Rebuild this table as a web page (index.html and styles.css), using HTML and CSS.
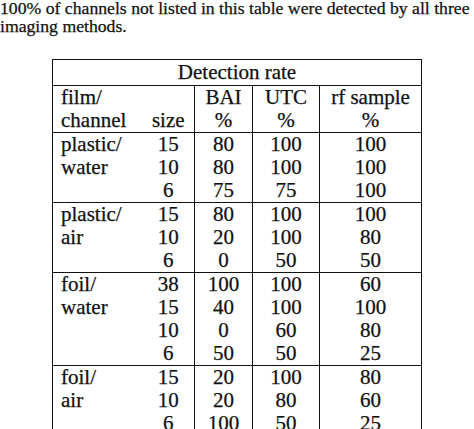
FILE: index.html
```html
<!DOCTYPE html>
<html>
<head>
<meta charset="utf-8">
<link rel="stylesheet" href="styles.css">
</head>
<body>
<p class="note">100% of channels not listed in this table were detected by all three<br>imaging methods.</p>
<table class="rates">
  <colgroup>
    <col class="c-film"><col class="c-size"><col class="c-bai"><col class="c-utc"><col class="c-rf">
  </colgroup>
  <thead>
    <tr class="title"><th colspan="5">Detection rate</th></tr>
    <tr><th class="film">film/</th><th></th><th>BAI</th><th>UTC</th><th>rf sample</th></tr>
    <tr><th class="film">channel</th><th>size</th><th>%</th><th>%</th><th>%</th></tr>
  </thead>
  <tbody>
    <tr><td class="film">plastic/</td><td>15</td><td>80</td><td>100</td><td>100</td></tr>
    <tr><td class="film">water</td><td>10</td><td>80</td><td>100</td><td>100</td></tr>
    <tr><td class="film"></td><td>6</td><td>75</td><td>75</td><td>100</td></tr>
  </tbody>
  <tbody>
    <tr><td class="film">plastic/</td><td>15</td><td>80</td><td>100</td><td>100</td></tr>
    <tr><td class="film">air</td><td>10</td><td>20</td><td>100</td><td>80</td></tr>
    <tr><td class="film"></td><td>6</td><td>0</td><td>50</td><td>50</td></tr>
  </tbody>
  <tbody>
    <tr><td class="film">foil/</td><td>38</td><td>100</td><td>100</td><td>60</td></tr>
    <tr><td class="film">water</td><td>15</td><td>40</td><td>100</td><td>100</td></tr>
    <tr><td class="film"></td><td>10</td><td>0</td><td>60</td><td>80</td></tr>
    <tr><td class="film"></td><td>6</td><td>50</td><td>50</td><td>25</td></tr>
  </tbody>
  <tbody>
    <tr><td class="film">foil/</td><td>15</td><td>20</td><td>100</td><td>80</td></tr>
    <tr><td class="film">air</td><td>10</td><td>20</td><td>80</td><td>60</td></tr>
    <tr><td class="film"></td><td>6</td><td>100</td><td>50</td><td>25</td></tr>
  </tbody>
</table>
</body>
</html>
```
FILE: styles.css
```css
html, body {
  margin: 0;
  padding: 0;
  overflow: hidden;
  background: #ffffff;
}
body {
  font-family: "Liberation Serif", "DejaVu Serif", serif;
  color: #111111;
  -webkit-text-stroke: 0.25px #111111;
}
.note {
  margin: 0;
  font-size: 17.7px;
  line-height: 17.5px;
  white-space: nowrap;
}
.rates {
  margin: 24px 0 0 52px;
  border-collapse: collapse;
  table-layout: fixed;
  width: 370px;
  border: 1px solid #111111;
  font-size: 21px;
}
.c-film { width: 90px; }
.c-size { width: 52px; }
.c-bai { width: 58px; }
.c-utc { width: 67px; }
.c-rf { width: 102px; }
.rates th, .rates td {
  font-weight: normal;
  padding: 0;
  height: 23px;
  line-height: 23px;
  text-align: center;
  white-space: nowrap;
}
.rates th:nth-child(n+3), .rates td:nth-child(n+3) {
  border-left: 1px solid #111111;
}
.rates .title th {
  height: 25px;
  border-bottom: 1px solid #111111;
}
.rates .film {
  text-align: left;
  padding-left: 8px;
}
.rates tbody {
  border-top: 1px solid #111111;
}
```
